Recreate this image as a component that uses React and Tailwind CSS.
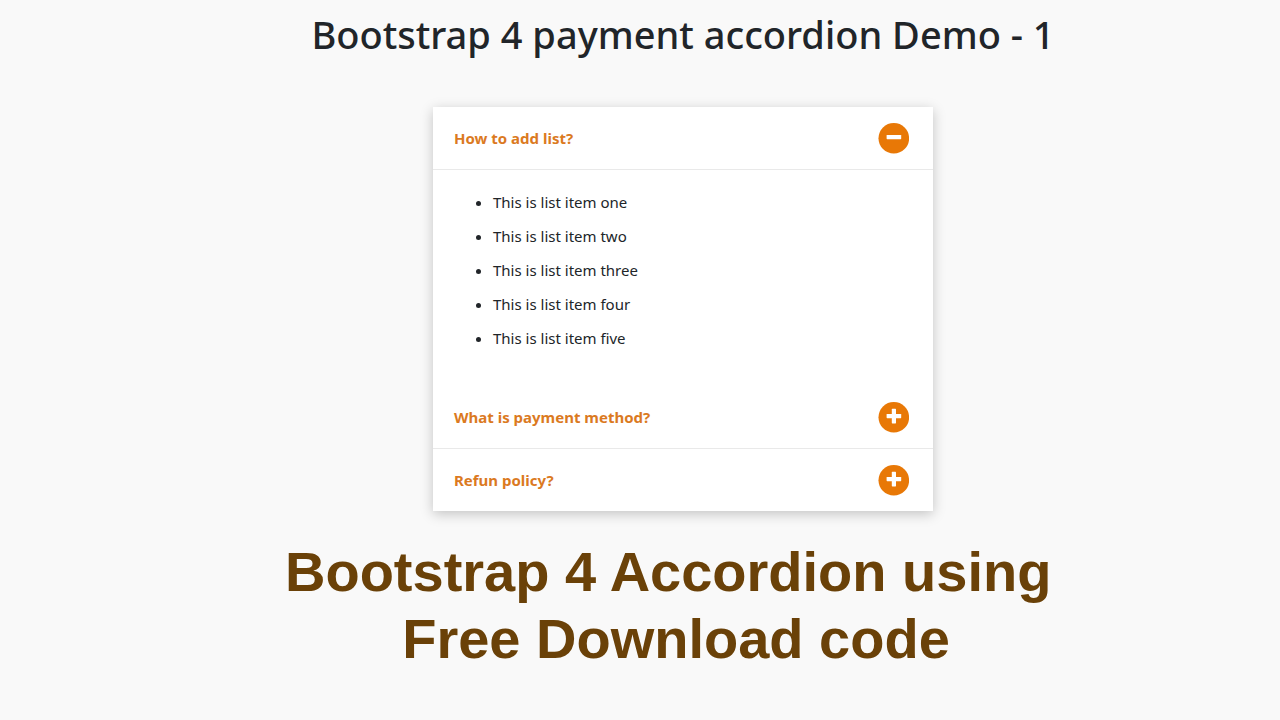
import { useState } from "react";

const sections = [
  {
    id: "list",
    title: "How to add list?",
    items: [
      "This is list item one",
      "This is list item two",
      "This is list item three",
      "This is list item four",
      "This is list item five",
    ],
  },
  {
    id: "payment",
    title: "What is payment method?",
    items: [],
  },
  {
    id: "refund",
    title: "Refun policy?",
    items: [],
  },
];

function ToggleIcon({ open }) {
  return (
    <svg viewBox="0 0 31 31" className="size-[31px] shrink-0" aria-hidden="true">
      <circle cx="15.8" cy="15.3" r="15.3" fill="#e87806" />
      <rect x="8.6" y="12" width="14.6" height="4.2" rx="0.6" fill="#fff" />
      {!open && <rect x="13.8" y="6.8" width="4.2" height="14.6" rx="0.6" fill="#fff" />}
    </svg>
  );
}

function AccordionItem({ section, open, onToggle }) {
  return (
    <div className="group">
      <h2>
        <button
          type="button"
          id={`${section.id}-head`}
          aria-expanded={open}
          aria-controls={`${section.id}-body`}
          onClick={onToggle}
          className="flex w-full cursor-pointer items-start justify-between border-b border-[#e9e9e9] pt-4 pr-6 pb-[15px] pl-[21px] text-left text-[15px] leading-[30px] font-bold text-[#db7a1f] group-last:border-b-0"
        >
          {section.title}
          <ToggleIcon open={open} />
        </button>
      </h2>
      <div id={`${section.id}-body`} role="region" aria-labelledby={`${section.id}-head`} hidden={!open}>
        <ul className="list-disc space-y-[10px] pt-5 pb-9 pl-[60px] text-[15px] leading-6 text-[#212529]">
          {section.items.map((item) => (
            <li key={item}>{item}</li>
          ))}
        </ul>
      </div>
    </div>
  );
}

export default function App() {
  const [openId, setOpenId] = useState("list");

  return (
    <main className="min-h-screen bg-[#f9f9f9] font-['Noto_Sans','Open_Sans',sans-serif]">
      <div className="flex flex-col items-center pl-[86px]">
        <h1 className="pt-[10px] text-center text-[38px] leading-12 font-medium text-[#212529]">
          Bootstrap 4 payment accordion Demo - 1
        </h1>
        <div className="mt-[49px] w-full max-w-[500px] bg-white shadow-[0_3px_12px_rgba(0,0,0,0.22)]">
          {sections.map((section) => (
            <AccordionItem
              key={section.id}
              section={section}
              open={openId === section.id}
              onToggle={() => setOpenId(openId === section.id ? null : section.id)}
            />
          ))}
        </div>
      </div>
      <p className="mt-[27px] pl-[72px] text-center font-['Liberation_Sans',Arial,sans-serif] text-[56px] leading-[67px] font-bold text-[#6a4108]">
        Bootstrap 4 Accordion using&nbsp;
        <br />
        Free Download code
      </p>
    </main>
  );
}
